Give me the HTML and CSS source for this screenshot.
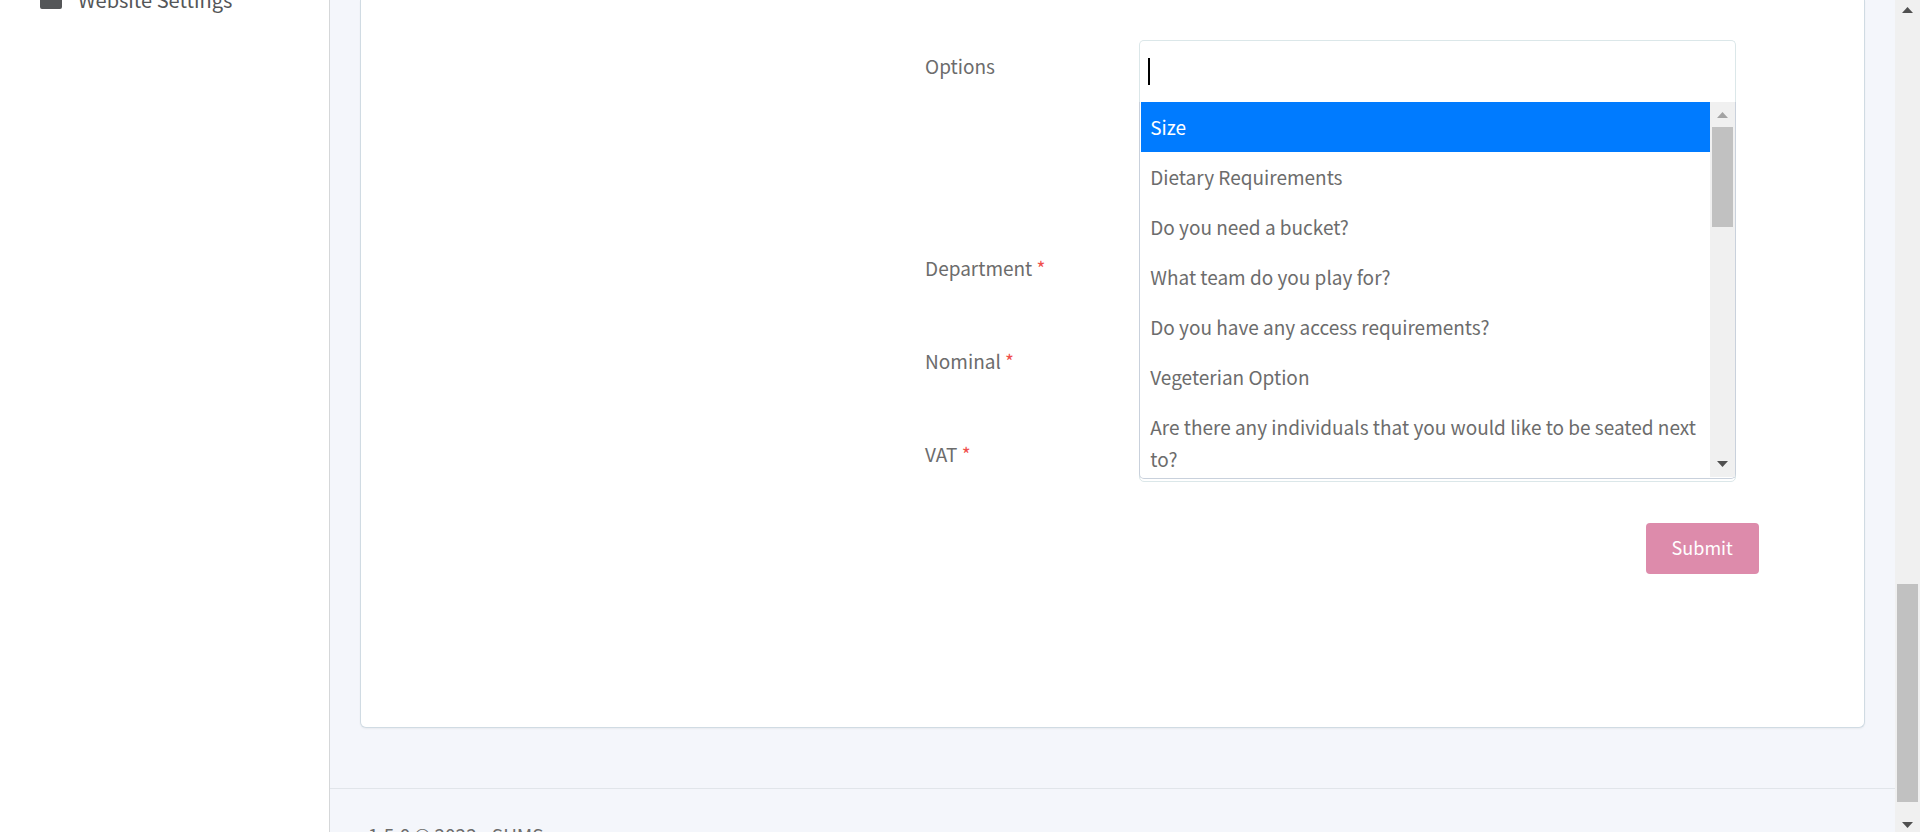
FILE: index.html
```html
<!DOCTYPE html>
<html lang="en">
<head>
<meta charset="utf-8">
<title>SUMS</title>
<link rel="stylesheet" href="styles.css">
</head>

<body>

<nav class="sidebar">
  <a class="nav-link" href="#">
    <svg class="nav-icon" viewBox="0 0 22 20"><path d="M2 1h6l3 3h9a2 2 0 0 1 2 2v11a2 2 0 0 1-2 2H2a2 2 0 0 1-2-2V3a2 2 0 0 1 2-2z"/></svg>
    <span>Website Settings</span>
  </a>
</nav>

<div class="page">
  <main class="card">
    <form class="form">

      <div class="form-row options-row">
        <label for="options">Options</label>
        <div class="field">
          <div class="select-search">
            <input id="options" type="text" autocomplete="off">
            <span class="caret"></span>
          </div>

          <div class="dropdown">
            <ul class="results">
              <li class="highlighted">Size</li>
              <li>Dietary Requirements</li>
              <li>Do you need a bucket?</li>
              <li>What team do you play for?</li>
              <li>Do you have any access requirements?</li>
              <li>Vegeterian Option</li>
              <li>Are there any individuals that you would like to be seated next to?</li>
            </ul>
            <div class="scrollbar">
              <svg class="arrow off" viewBox="0 0 25 25"><path d="M7 16L12.500 10L18 16z"/></svg>
              <div class="track"><div class="thumb list-thumb"></div></div>
              <svg class="arrow" viewBox="0 0 25 25"><path d="M7 9L12.500 15L18 9z"/></svg>
            </div>
          </div>
        </div>
      </div>

      <div class="form-row">
        <label for="department">Department <span class="required">*</span></label>
        <div class="field"><select id="department"></select></div>
      </div>

      <div class="form-row">
        <label for="nominal">Nominal <span class="required">*</span></label>
        <div class="field"><select id="nominal"></select></div>
      </div>

      <div class="form-row">
        <label for="vat">VAT <span class="required">*</span></label>
        <div class="field"><select id="vat"></select></div>
      </div>

      <div class="form-actions">
        <button class="btn-submit" type="submit">Submit</button>
      </div>

    </form>
  </main>

  <footer class="footer">1.5.0 © 2022 - SUMS</footer>
</div>

<div class="scrollbar page-scrollbar">
  <svg class="arrow" viewBox="0 0 25 25"><path d="M7 13L12.500 7L18 13z"/></svg>
  <div class="track page-track"><div class="thumb page-thumb"></div></div>
  <svg class="arrow" viewBox="0 0 25 25"><path d="M7 15L12.500 21L18 15z"/></svg>
</div>

</body>
</html>
```

FILE: styles.css
```css
* {
  box-sizing: border-box;
}

body {
  margin: 0;
  height: 100vh;
  display: flex;
  overflow: hidden;
  background-color: #f4f6fb;
  color: #6c6c6c;
  font-family: "Noto Sans CJK SC", "Open Sans", sans-serif;
  font-size: 19px;
  line-height: 32px;
}

/* sidebar */
.sidebar {
  flex: 0 0 330px;
  background-color: #fff;
  border-right: 1px solid #d5d7d9;
}

.nav-link {
  display: flex;
  align-items: center;
  gap: 16px;
  margin-top: -16px;
  padding-left: 40px;
  color: #545658;
  font-size: 20px;
  text-decoration: none;
}

.nav-icon {
  width: 22px;
  height: 20px;
  fill: #545658;
}

/* content */
.page {
  flex: 1;
  min-width: 0;
  overflow: hidden;
}

.card {
  margin: 0 30px 60px;
  padding: 40px 0 153px;
  background-color: #fff;
  border: 1px solid #d0dbe3;
  border-top: none;
  border-radius: 0 0 6px 6px;
  box-shadow: 0 1px 2px rgba(0, 0, 0, 0.05);
}

.form {
  margin: 0 7% 0 36%;
}

.form-row {
  display: flex;
  min-height: 54px;
  margin-bottom: 39px;
}

.options-row {
  min-height: 163px;
}

.form-row label {
  width: 25%;
  padding: 10px 0 12px 23px;
}

.field {
  position: relative;
  width: 75%;
  padding: 0 23px;
}

.field select {
  display: block;
  width: 100%;
  height: 54px;
  padding: 0 9px;
  background-color: #fff;
  border: 1px solid #dbe7e9;
  border-radius: 5px;
  appearance: none;
}

.required {
  color: #f0504c;
}

/* search box of the multi select */
.select-search {
  position: relative;
  height: 62px;
}

.select-search input {
  display: block;
  width: 100%;
  height: 62px;
  padding: 0 9px;
  border: 1px solid #dbe7e9;
  border-bottom: none;
  border-radius: 5px 5px 0 0;
  font: inherit;
  outline: none;
}

.caret {
  position: absolute;
  top: 18px;
  left: 9px;
  width: 2px;
  height: 27px;
  background-color: #000;
}

.dropdown {
  position: absolute;
  z-index: 10;
  left: 23px;
  right: 23px;
  display: flex;
  height: 377px;
  padding-bottom: 1px;
  background-color: #fff;
  border: 1px solid #c9d1dc;
  border-top: none;
  border-radius: 0 0 5px 5px;
}

.results {
  flex: 1;
  margin: 0;
  padding: 0 0 0 1px;
  overflow: hidden;
  list-style: none;
}

.results li {
  padding: 9px;
}

.results .highlighted {
  background-color: #007bff;
  color: #fff;
}

/* scrollbars */
.scrollbar {
  flex: 0 0 25px;
  display: flex;
  flex-direction: column;
  background-color: #f0f0f0;
}

.arrow {
  width: 25px;
  height: 25px;
  fill: #505050;
}

.arrow.off {
  fill: #a3a3a3;
}

.track {
  flex: 1;
  padding: 0 2px;
}

.thumb {
  background-color: #c1c1c1;
}

.list-thumb {
  height: 100px;
}

.page-track {
  display: flex;
  flex-direction: column;
  justify-content: flex-end;
  padding-bottom: 5px;
}

.page-thumb {
  height: 28%;
}

.form-actions {
  display: flex;
  justify-content: flex-end;
  padding-top: 2px;
}

.btn-submit {
  height: 51px;
  padding: 0 26px 4px;
  background-color: #dd8bab;
  border: none;
  border-radius: 4px;
  color: #fff;
  font: inherit;
  font-size: 18px;
  cursor: pointer;
}

.footer {
  padding: 30px 38px;
  border-top: 1px solid #e1e5ea;
}
```
